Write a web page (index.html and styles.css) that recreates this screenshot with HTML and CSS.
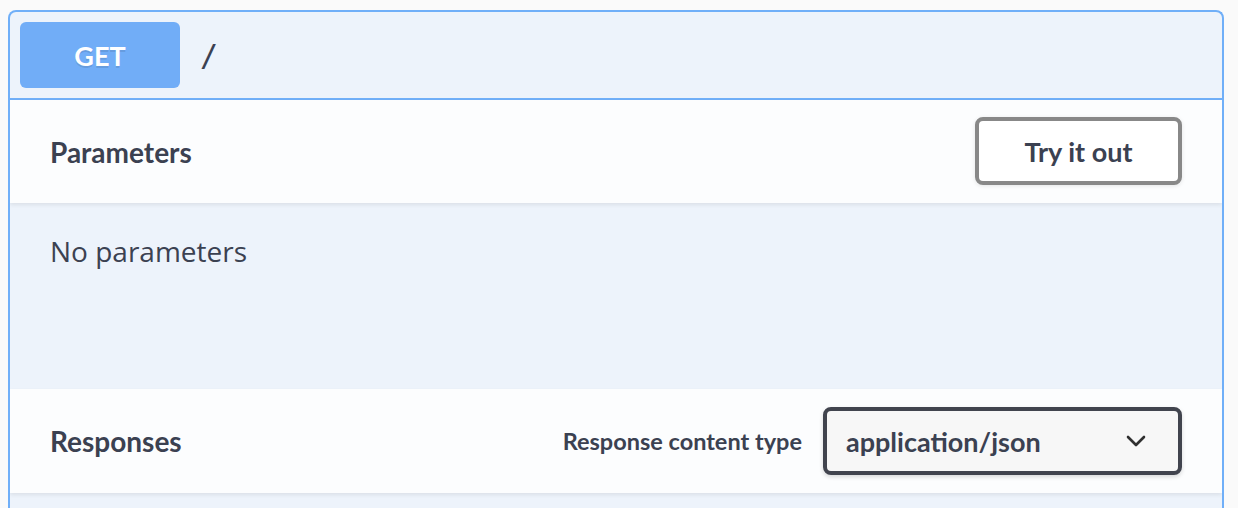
FILE: index.html
```html
<!DOCTYPE html>
<html>
<head>
<meta charset="utf-8">
<link rel="stylesheet" href="styles.css">
</head>
<body>
<div class="opblock">
  <div class="summary">
    <span class="method">GET</span>
    <span class="path">/</span>
  </div>
  <div class="section-header">
    <h4 class="title">Parameters</h4>
    <button class="try-btn">Try it out</button>
  </div>
  <div class="params-body">
    <p class="no-params">No parameters</p>
  </div>
  <div class="section-header responses-header">
    <h4 class="title">Responses</h4>
    <div class="content-type">
      <span class="ct-label">Response content type</span>
      <div class="select">
        <span class="select-value">application/json</span>
        <svg class="chevron" width="20" height="12" viewBox="0 0 20 12"><path d="M2 2 L10 10 L18 2" fill="none" stroke="#303030" stroke-width="2.6" stroke-linecap="round" stroke-linejoin="round"/></svg>
      </div>
    </div>
  </div>
  <div class="responses-body"></div>
</div>
</body>
</html>
```
FILE: styles.css
```css
html, body {
  margin: 0;
  padding: 0;
  background: #fafafa;
  overflow: hidden;
}
body {
  padding: 10px 14px 0 8px;
  color: #3b4151;
}
.opblock {
  border: 2px solid #70aff8;
  border-bottom: none;
  border-radius: 8px 8px 0 0;
  background: #edf3fb;
  height: 520px;
  overflow: hidden;
}
.summary {
  display: flex;
  align-items: center;
  padding: 10px 10px;
  border-bottom: 2px solid #70aff8;
  height: 66px;
}
.method {
  width: 160px;
  height: 66px;
  border-radius: 6px;
  background: #71adf7;
  color: #fff;
  font-family: "Lato", sans-serif;
  font-weight: 700;
  font-size: 27px;
  display: flex;
  align-items: center;
  justify-content: center;
  text-shadow: 0 2px 0 rgba(0,0,0,.1);
}
.path {
  margin-left: 20px;
  font-family: "DejaVu Sans Mono", monospace;
  font-size: 30px;
  color: #3b4151;
}
.section-header {
  display: flex;
  align-items: center;
  justify-content: space-between;
  height: 103px;
  padding: 0 40px 0 40px;
  background: #fcfdfe;
  box-shadow: 0 2px 4px rgba(0,0,0,.08);
  position: relative;
}
.title {
  margin: 0;
  font-family: "Lato", sans-serif;
  font-weight: 700;
  font-size: 28px;
  color: #3b4151;
}
.try-btn {
  width: 207px;
  height: 68px;
  margin-top: -1px;
  border: 4px solid #888;
  border-radius: 8px;
  background: #fff;
  font-family: "Lato", sans-serif;
  font-weight: 700;
  font-size: 27px;
  color: #3b4151;
  box-shadow: 0 1px 4px rgba(0,0,0,.1);
  padding: 0;
}
.params-body {
  height: 186px;
  padding: 0 40px;
  box-sizing: border-box;
}
.no-params {
  margin: 0;
  padding-top: 27px;
  font-family: "Open Sans", sans-serif;
  font-size: 28px;
  line-height: 42px;
  color: #3b4151;
}
.responses-header {
  height: 104px;
}
.content-type {
  display: flex;
  align-items: center;
  gap: 21px;
}
.ct-label {
  font-family: "Lato", sans-serif;
  font-weight: 700;
  font-size: 23.5px;
  color: #3b4151;
}
.select {
  width: 359px;
  height: 68px;
  box-sizing: border-box;
  border: 4px solid #41444e;
  border-radius: 8px;
  background: #f7f7f7;
  display: flex;
  align-items: center;
  justify-content: space-between;
  padding: 0 32px 0 19px;
  box-shadow: 0 2px 4px rgba(0,0,0,.15);
}
.select-value {
  font-family: "Lato", sans-serif;
  font-weight: 700;
  font-size: 27px;
  color: #3b4151;
}
.chevron {
  display: block;
}
.responses-body {
  height: 40px;
}
```
